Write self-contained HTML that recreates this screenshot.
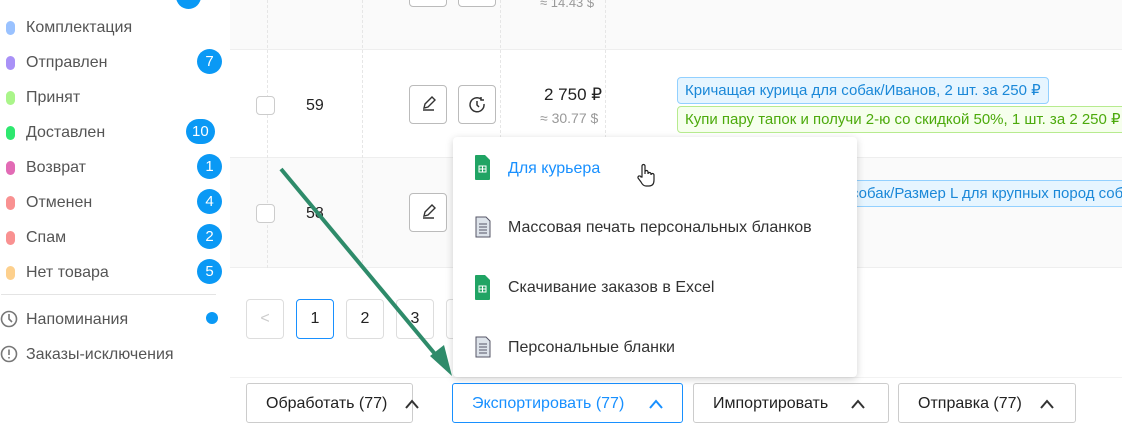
<!DOCTYPE html>
<html><head><meta charset="utf-8"><style>
*{box-sizing:border-box;margin:0;padding:0}
body{width:1122px;height:448px;overflow:hidden;background:#fff;font-family:"Liberation Sans","DejaVu Sans",sans-serif;position:relative;color:#222}
.a{position:absolute}
.side{font-size:16px;color:#555}
.dot{position:absolute;left:6px;width:9px;height:14px;border-radius:5px}
.badge{position:absolute;background:#0a99f5;color:#fff;font-size:15px;height:25px;min-width:25px;border-radius:13px;text-align:center;line-height:25px;padding:0 6px}
.vd{position:absolute;top:0;height:268px;border-left:1px dashed #e6e6e6}
.btn{position:absolute;border:1px solid #bbb;border-radius:4px;background:#fff}
.cb{position:absolute;width:19px;height:19px;border:1px solid #ccc;border-radius:4px;background:#fff}
.tag{position:absolute;font-size:15px;height:27px;line-height:25px;padding:0 7px;border-radius:4px;white-space:nowrap}
.pg{position:absolute;top:299px;width:38px;height:40px;border:1px solid #ddd;border-radius:4px;background:#fff;text-align:center;line-height:38px;font-size:16px}
.bb{position:absolute;top:383px;height:40px;border:1px solid #ccc;border-radius:3px;background:#fff;font-size:16px;line-height:40px;padding-left:19px;white-space:nowrap}
.bb svg{position:absolute;top:13px}
.mi{position:absolute;left:508px;font-size:16px;color:#333}
</style></head><body>
<div class="side">
<div class="badge" style="left:176px;top:-16px">&nbsp;</div>
<div class="dot" style="top:21px;background:#9ac2ff"></div><div class="a" style="left:26px;top:19px">Комплектация</div>
<div class="dot" style="top:56px;background:#a991f7"></div><div class="a" style="left:26px;top:54px">Отправлен</div><div class="badge" style="left:197px;top:49px;padding:0">7</div>
<div class="dot" style="top:91px;background:#aaf58a"></div><div class="a" style="left:26px;top:89px">Принят</div>
<div class="dot" style="top:126px;background:#2ee86f"></div><div class="a" style="left:26px;top:124px">Доставлен</div><div class="badge" style="left:186px;top:119px">10</div>
<div class="dot" style="top:161px;background:#e26bb5"></div><div class="a" style="left:26px;top:159px">Возврат</div><div class="badge" style="left:197px;top:154px;padding:0">1</div>
<div class="dot" style="top:196px;background:#f99191"></div><div class="a" style="left:26px;top:194px">Отменен</div><div class="badge" style="left:197px;top:189px;padding:0">4</div>
<div class="dot" style="top:231px;background:#f99191"></div><div class="a" style="left:26px;top:229px">Спам</div><div class="badge" style="left:197px;top:224px;padding:0">2</div>
<div class="dot" style="top:266px;background:#fdd08d"></div><div class="a" style="left:26px;top:264px">Нет товара</div><div class="badge" style="left:197px;top:259px;padding:0">5</div>
<div class="a" style="left:1px;top:294px;width:215px;border-top:1px solid #e4e4e4"></div>
<svg class="a" style="left:0;top:310px" width="18" height="18" viewBox="0 0 18 18" fill="none" stroke="#777" stroke-width="1.6"><circle cx="9" cy="9" r="7.5"/><path d="M9 4v5l3 3"/></svg>
<div class="a" style="left:26px;top:311px">Напоминания</div><div class="a" style="left:206px;top:312px;width:12px;height:12px;border-radius:6px;background:#0a99f5"></div>
<svg class="a" style="left:0;top:345px" width="18" height="18" viewBox="0 0 18 18" fill="none" stroke="#777" stroke-width="1.6"><circle cx="9" cy="9" r="7.5"/><path d="M9 4.5v5.5M9 12v1.5"/></svg>
<div class="a" style="left:26px;top:346px">Заказы-исключения</div>
</div>
<div class="a" style="left:230px;top:0;width:892px;height:50px;background:#fafafa;border-bottom:1px solid #eee"></div>
<div class="a" style="left:230px;top:157px;width:892px;height:111px;background:#fafafa;border-top:1px solid #eee;border-bottom:1px solid #eee"></div>
<div class="vd" style="left:267px"></div><div class="vd" style="left:362px"></div><div class="vd" style="left:500px"></div><div class="vd" style="left:605px"></div>
<div class="btn" style="left:409px;top:-10px;width:38px;height:17px"></div><div class="btn" style="left:458px;top:-10px;width:38px;height:17px"></div>
<div class="a" style="left:540px;top:-5px;font-size:13px;color:#999">≈ 14.43 $</div>
<div class="cb" style="left:256px;top:96px"></div><div class="a" style="left:306px;top:97px;font-size:16px">59</div>
<div class="btn" style="left:409px;top:85px;width:38px;height:39px"><svg width="36" height="37" viewBox="0 0 36 37" fill="none" stroke="#333" stroke-width="1.4"><path d="M13 24h11M14 22l1-4 7-7 3 3-7 7z"/></svg></div>
<div class="btn" style="left:458px;top:85px;width:38px;height:39px"><svg width="36" height="37" viewBox="0 0 36 37" fill="none" stroke="#333" stroke-width="1.5"><path d="M22 13a7 7 0 1 0 3 5"/><path d="M18 15v4l2 2M22 11v3h3"/></svg></div>
<div class="a" style="left:544px;top:85px;font-size:17px">2 750 ₽</div>
<div class="a" style="left:540px;top:110px;font-size:14px;color:#999">≈ 30.77 $</div>
<div class="tag" style="left:677px;top:77px;background:#e6f5ff;border:1px solid #92d0ff;color:#1b88d8">Кричащая курица для собак/Иванов, 2 шт. за 250 ₽</div>
<div class="tag" style="left:677px;top:106px;background:#f6ffed;border:1px solid #b7eb8f;color:#4caa0c">Купи пару тапок и получи 2-ю со скидкой 50%, 1 шт. за 2 250 ₽</div>
<div class="tag" style="left:830px;top:180px;background:#e6f5ff;border:1px solid #92d0ff;color:#1b88d8;padding-left:20px">собак/Размер L для крупных пород собак</div>
<div class="cb" style="left:256px;top:204px"></div><div class="a" style="left:306px;top:205px;font-size:16px">58</div>
<div class="btn" style="left:409px;top:193px;width:38px;height:39px"><svg width="36" height="37" viewBox="0 0 36 37" fill="none" stroke="#333" stroke-width="1.4"><path d="M13 24h11M14 22l1-4 7-7 3 3-7 7z"/></svg></div>
<div class="pg" style="left:246px;color:#ccc">&lt;</div>
<div class="pg" style="left:296px;border-color:#1890ff;color:#222">1</div>
<div class="pg" style="left:346px">2</div>
<div class="pg" style="left:396px">3</div>
<div class="pg" style="left:446px"></div>
<div class="a" style="left:230px;top:377px;width:892px;height:1px;background:#f2f2f2"></div>
<div class="bb" style="left:246px;width:167px">Обработать (77)<svg style="left:157px" width="16" height="14" viewBox="0 0 16 14" fill="none" stroke="#333" stroke-width="2"><path d="M2 11l6-7 6 7"/></svg></div>
<div class="bb" style="left:452px;width:231px;border-color:#1890ff;color:#1890ff">Экспортировать (77)<svg style="left:195px" width="16" height="14" viewBox="0 0 16 14" fill="none" stroke="#1890ff" stroke-width="2"><path d="M2 11l6-7 6 7"/></svg></div>
<div class="bb" style="left:693px;width:196px">Импортировать<svg style="left:156px" width="16" height="14" viewBox="0 0 16 14" fill="none" stroke="#333" stroke-width="2"><path d="M2 11l6-7 6 7"/></svg></div>
<div class="bb" style="left:898px;width:178px">Отправка (77)<svg style="left:140px" width="16" height="14" viewBox="0 0 16 14" fill="none" stroke="#333" stroke-width="2"><path d="M2 11l6-7 6 7"/></svg></div>
<div class="a" style="left:453px;top:137px;width:404px;height:240px;background:#fff;border-radius:4px;box-shadow:0 2px 8px rgba(0,0,0,.18)"></div>
<svg class="a" style="left:475px;top:155px" width="15" height="25" viewBox="0 0 15 25"><path d="M0 1q0-1 1-1h9l5 5v19q0 1-1 1H1q-1 0-1-1z" fill="#20a464"/><path d="M4 11h7v6H4zM4 14h7M7.5 11v6" stroke="#fff" stroke-width="1" fill="none"/></svg>
<div class="mi" style="top:160px;color:#1890ff">Для курьера</div>
<svg class="a" style="left:636px;top:163px" width="20" height="25" viewBox="0 0 20 25" fill="#fff" stroke="#222" stroke-width="1.2"><path d="M6 14V3a1.5 1.5 0 0 1 3 0v8V9a1.5 1.5 0 0 1 3 0v2a1.5 1.5 0 0 1 3 0v1a1.5 1.5 0 0 1 3 0v5q0 6-5 6H10q-3 0-5-4l-3-4a1.5 1.5 0 0 1 3-1z"/></svg>
<svg class="a" style="left:475px;top:216px" width="16" height="22" viewBox="0 0 16 22" fill="#dde3ea" stroke="#556" stroke-width="1"><path d="M1 1h10l4 4v16H1z"/><path d="M4 8h8M4 11h8M4 14h8M4 17h8" fill="none"/></svg>
<div class="mi" style="top:219px">Массовая печать персональных бланков</div>
<svg class="a" style="left:475px;top:275px" width="15" height="25" viewBox="0 0 15 25"><path d="M0 1q0-1 1-1h9l5 5v19q0 1-1 1H1q-1 0-1-1z" fill="#20a464"/><path d="M4 11h7v6H4zM4 14h7M7.5 11v6" stroke="#fff" stroke-width="1" fill="none"/></svg>
<div class="mi" style="top:279px">Скачивание заказов в Excel</div>
<svg class="a" style="left:475px;top:336px" width="16" height="22" viewBox="0 0 16 22" fill="#dde3ea" stroke="#556" stroke-width="1"><path d="M1 1h10l4 4v16H1z"/><path d="M4 8h8M4 11h8M4 14h8M4 17h8" fill="none"/></svg>
<div class="mi" style="top:339px">Персональные бланки</div>
<svg class="a" style="left:0;top:0" width="1122" height="448"><line x1="281" y1="169" x2="440" y2="360" stroke="#2e8b6a" stroke-width="4"/><path d="M430 356l22 20-8-31z" fill="#2e8b6a"/></svg>
</body></html>
